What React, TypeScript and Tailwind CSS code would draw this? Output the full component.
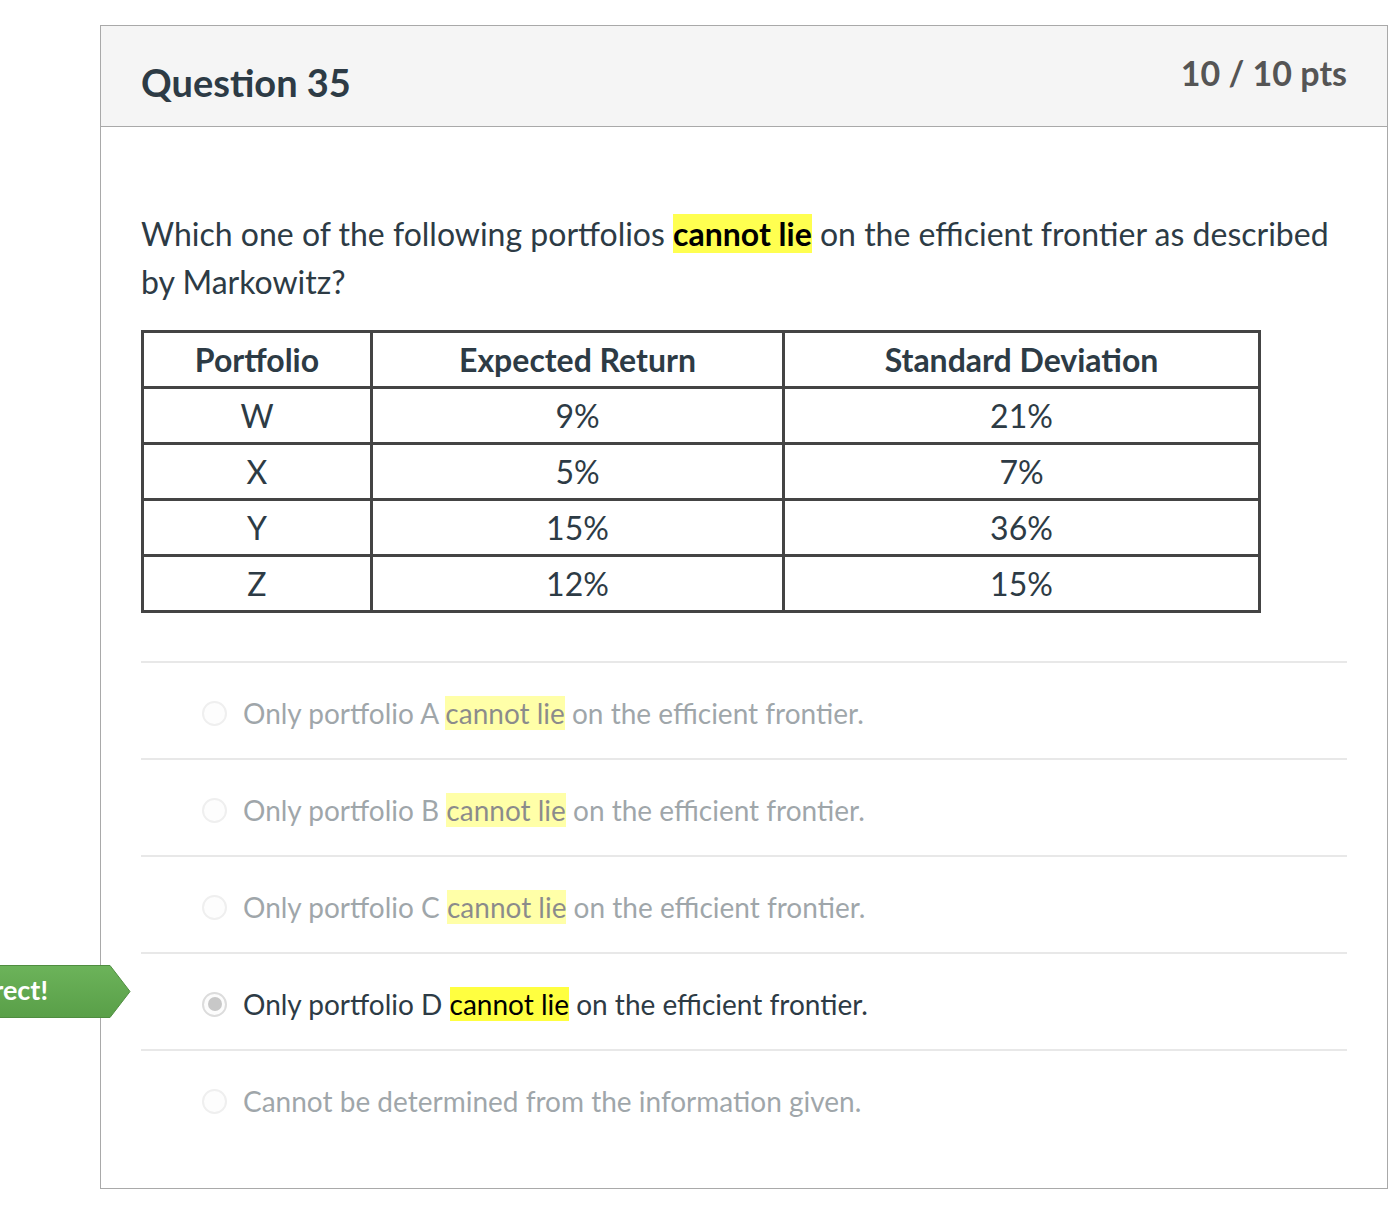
const rows = [
  { p: "W", r: "9%", s: "21%" },
  { p: "X", r: "5%", s: "7%" },
  { p: "Y", r: "15%", s: "36%" },
  { p: "Z", r: "12%", s: "15%" },
];

const answers = [
  { pre: "Only portfolio A", hl: true, selected: false },
  { pre: "Only portfolio B", hl: true, selected: false },
  { pre: "Only portfolio C", hl: true, selected: false },
  { pre: "Only portfolio D", hl: true, selected: true },
  { pre: "Cannot be determined from the information given.", hl: false, selected: false },
];

function CorrectTag() {
  return (
    <div className="absolute left-[-202px] top-[11px] h-[53px] w-[192px]">
      <svg className="absolute inset-0" width="192" height="53" viewBox="0 0 192 53">
        <defs>
          <linearGradient id="tagGrad" x1="0" y1="0" x2="0" y2="1">
            <stop offset="0" stopColor="#6cb35a" />
            <stop offset="1" stopColor="#599f48" />
          </linearGradient>
        </defs>
        <polygon points="0.5,0.5 171,0.5 191,26.5 171,52.5 0.5,52.5" fill="url(#tagGrad)" stroke="#4f8d40" strokeWidth="1" />
      </svg>
      <span className="absolute right-[83px] top-[10px] text-[27px] leading-[30px] font-bold text-white">
        Correct!
      </span>
    </div>
  );
}

function Radio({ selected }: { selected: boolean }) {
  return (
    <span className="flex h-[25px] w-[25px] shrink-0 items-center justify-center rounded-full border-2 border-[#dcdcdc] bg-[#fcfcfc]">
      {selected && <span className="h-[14px] w-[14px] rounded-full bg-[#c8c8c8]" />}
    </span>
  );
}

export default function App() {
  return (
    <div className="min-h-[1208px] bg-white pl-[100px] pt-[25px] text-[#2d3b45]" style={{ fontFamily: "Lato, 'Noto Sans', sans-serif" }}>
      <div className="w-[1288px] border border-[#a9a9a9]">
        <div className="flex h-[101px] items-start justify-between border-b border-[#a9a9a9] bg-[#f5f5f5] pl-[40px] pr-[40px]">
          <h2 className="pt-[34px] text-[38px] leading-[44px] font-bold text-[#2d3b45]">Question 35</h2>
          <div className="pt-[27px] text-[34px] leading-[40px] font-bold text-[#555]">10 / 10 pts</div>
        </div>

        <div className="px-[40px] pt-[83px] pb-[42px]">
          <p className="text-[32px] leading-[48px]">
            Which one of the following portfolios{" "}
            <strong className="bg-[#ffff50] text-black">cannot lie</strong> on the efficient frontier as described
            by Markowitz?
          </p>

          <table className="mt-[24px] w-[1120px] border-collapse border-[3px] border-[#333] text-center text-[32px]">
            <thead>
              <tr className="h-[56px]">
                <th className="w-[229px] border-[3px] border-[#444] font-bold">Portfolio</th>
                <th className="w-[412px] border-[3px] border-[#444] font-bold">Expected Return</th>
                <th className="border-[3px] border-[#444] font-bold">Standard Deviation</th>
              </tr>
            </thead>
            <tbody>
              {rows.map((row) => (
                <tr key={row.p} className="h-[56px]">
                  <td className="border-[3px] border-[#444]">{row.p}</td>
                  <td className="border-[3px] border-[#444]">{row.r}</td>
                  <td className="border-[3px] border-[#444]">{row.s}</td>
                </tr>
              ))}
            </tbody>
          </table>

          <div className="mt-[48px]">
            {answers.map((a) => (
              <div key={a.pre} className="relative flex h-[97px] items-center border-t-2 border-[#e8e8e8] pt-[5px] pl-[61px]">
                {a.selected && <CorrectTag />}
                <div className={a.selected ? "flex items-center" : "flex items-center opacity-45"}>
                  <Radio selected={a.selected} />
                  <span className="ml-[16px] text-[28px] leading-[36px]">
                    {a.pre}
                    {a.hl && (
                      <>
                        {" "}
                        <span className="bg-[#ffff40] text-black">cannot lie</span> on the efficient frontier.
                      </>
                    )}
                  </span>
                </div>
              </div>
            ))}
          </div>
        </div>
      </div>
    </div>
  );
}
